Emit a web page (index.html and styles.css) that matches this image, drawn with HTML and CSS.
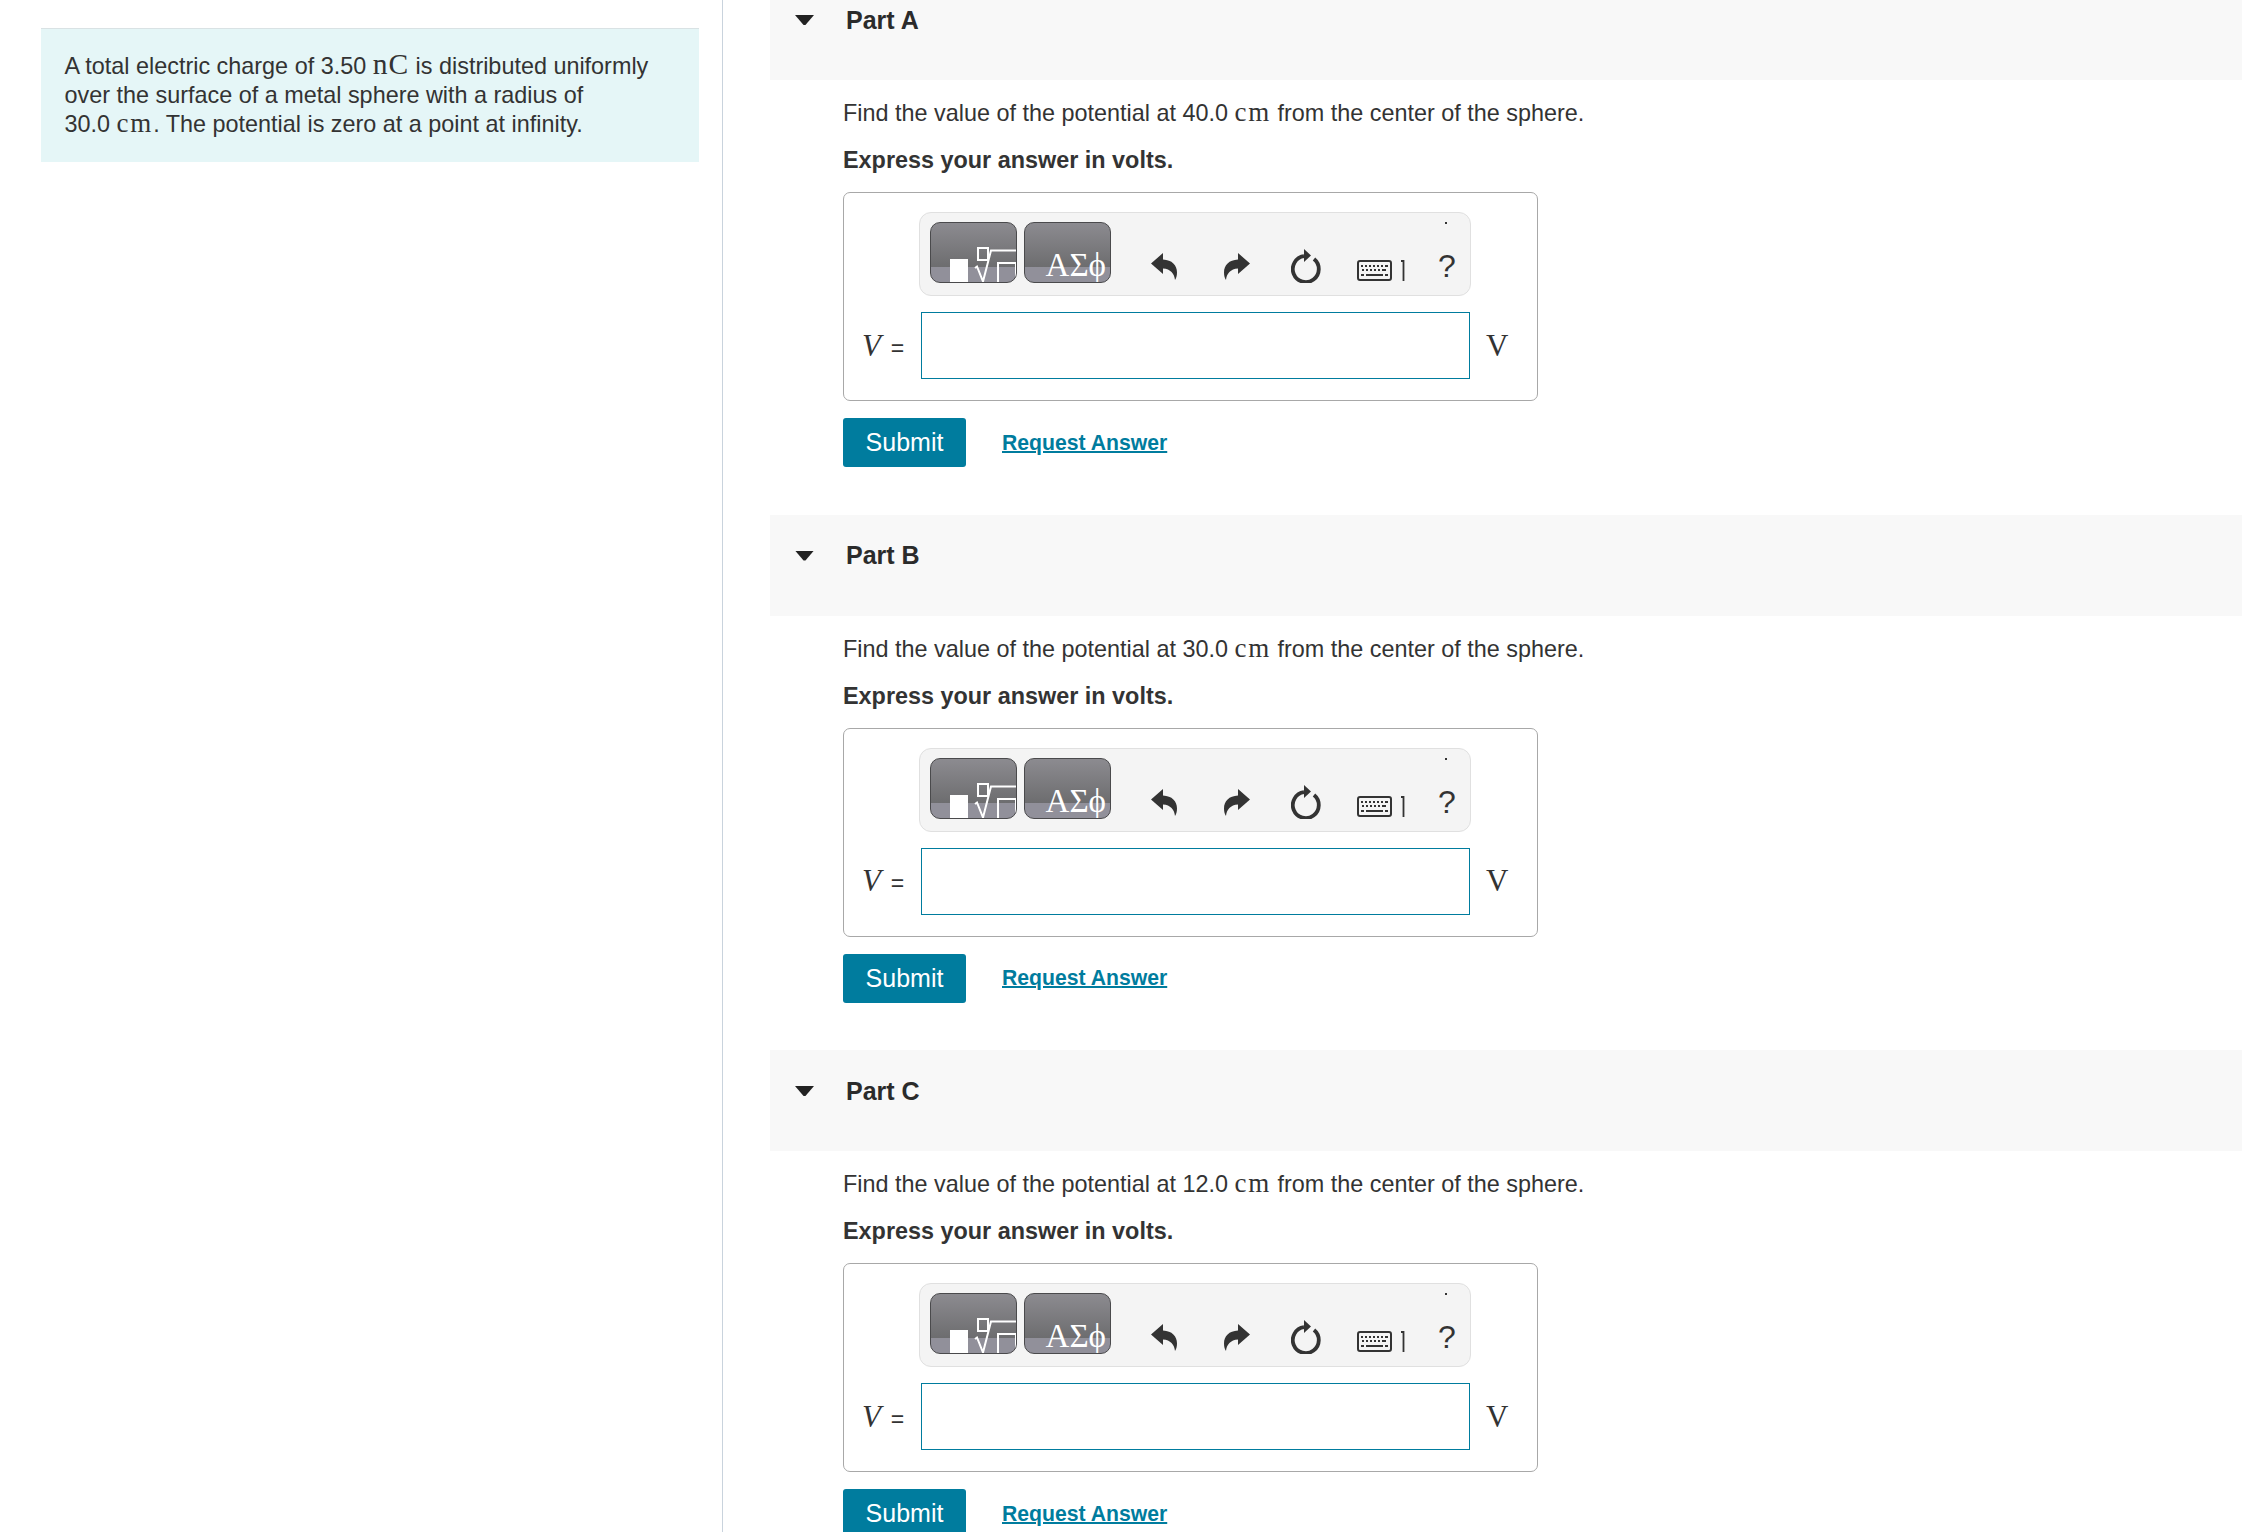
FILE: index.html
```html
<!DOCTYPE html>
<html lang="en">
<head>
<meta charset="utf-8">
<title>Electric potential of a charged sphere</title>
<link rel="stylesheet" href="styles.css">
</head>
<body>
<svg class="defs" width="0" height="0" aria-hidden="true">
  <symbol id="i-template" viewBox="0 0 87 61">
    <rect x="20" y="37" width="18" height="24" fill="#fff"/>
    <path d="M48 26h10v12h-10zM45 46l2-1.500 6 15 8-31h26M68 61v-20h18v20" fill="none" stroke="#fff" stroke-width="2"/>
  </symbol>
  <symbol id="i-undo" viewBox="0 0 26 28">
    <path d="M0 11.500 12 1v6.500c9 .5 14 5.500 14 13 0 3-.7 5.500-2 7.500-.6-6.500-4.500-11-12-11.500V22z" fill="#333"/>
  </symbol>
  <symbol id="i-redo" viewBox="0 0 26 28">
    <path d="M26 11.500 14 1v6.500C5 8 0 13 0 20.500c0 3 .7 5.500 2 7.500 .6-6.500 4.500-11 12-11.500V22z" fill="#333"/>
  </symbol>
  <symbol id="i-reset" viewBox="0 0 30 34">
    <path d="M23 10A13 13 0 1 1 13 7.200" fill="none" stroke="#333" stroke-width="3.800"/>
    <path d="M13 0l7 6.500-7 6.500z" fill="#333"/>
  </symbol>
  <symbol id="i-keys" viewBox="0 0 35 21">
    <rect x="1" y="1" width="33" height="19" rx="2" fill="none" stroke="#333" stroke-width="2"/>
    <path d="M4 5h2v2H4zM8 5h2v2H8zM12 5h2v2h-2zM16 5h2v2h-2zM20 5h2v2h-2zM24 5h2v2h-2zM28 5h3v2h-3zM5 9h2v2H5zM9 9h2v2H9zM13 9h2v2h-2zM17 9h2v2h-2zM21 9h2v2h-2zM25 9h4v2h-4zM4 14h3v2H4zM9 14h17v2H9zM28 14h3v2h-3z" fill="#333"/>
  </symbol>
  <symbol id="i-bracket" viewBox="0 0 4 21">
    <path d="M0 1h2.500v20" fill="none" stroke="#333" stroke-width="1.800"/>
  </symbol>
</svg>
<div class="page">
  <aside class="sidebar">
    <div class="intro">A total electric charge of 3.50 <span class="unit unit-lg">nC</span> is distributed uniformly<br>over the surface of a metal sphere with a radius of<br>30.0 <span class="unit">cm</span>. The potential is zero at a point at infinity.</div>
  </aside>
  <main class="parts">

    <section class="part">
      <header class="part-head"><span class="caret"></span><h2 class="part-title">Part A</h2></header>
      <p class="prompt">Find the value of the potential at 40.0 <span class="unit">cm</span> from the center of the sphere.</p>
      <p class="instruction">Express your answer in volts.</p>
      <div class="answer-box">
        <div class="toolbar">
          <span class="tool-btn"><svg class="btn-art"><use href="#i-template"/></svg></span>
          <span class="tool-btn tool-greek">ΑΣϕ</span>
          <svg class="ic ic-undo"><use href="#i-undo"/></svg>
          <svg class="ic ic-redo"><use href="#i-redo"/></svg>
          <svg class="ic ic-reset"><use href="#i-reset"/></svg>
          <svg class="ic ic-keys"><use href="#i-keys"/></svg>
          <svg class="ic ic-bracket"><use href="#i-bracket"/></svg>
          <span class="ic-help">?</span>
          <span class="tool-dot"></span>
        </div>
        <div class="answer-row">
          <span class="answer-label"><i class="var">V</i> <span class="eq">=</span></span>
          <span class="answer-input"></span>
          <span class="answer-unit">V</span>
        </div>
      </div>
      <div class="actions"><button class="submit">Submit</button><a class="request" href="#">Request Answer</a></div>
    </section>

    <section class="part">
      <header class="part-head"><span class="caret"></span><h2 class="part-title">Part B</h2></header>
      <p class="prompt">Find the value of the potential at 30.0 <span class="unit">cm</span> from the center of the sphere.</p>
      <p class="instruction">Express your answer in volts.</p>
      <div class="answer-box">
        <div class="toolbar">
          <span class="tool-btn"><svg class="btn-art"><use href="#i-template"/></svg></span>
          <span class="tool-btn tool-greek">ΑΣϕ</span>
          <svg class="ic ic-undo"><use href="#i-undo"/></svg>
          <svg class="ic ic-redo"><use href="#i-redo"/></svg>
          <svg class="ic ic-reset"><use href="#i-reset"/></svg>
          <svg class="ic ic-keys"><use href="#i-keys"/></svg>
          <svg class="ic ic-bracket"><use href="#i-bracket"/></svg>
          <span class="ic-help">?</span>
          <span class="tool-dot"></span>
        </div>
        <div class="answer-row">
          <span class="answer-label"><i class="var">V</i> <span class="eq">=</span></span>
          <span class="answer-input"></span>
          <span class="answer-unit">V</span>
        </div>
      </div>
      <div class="actions"><button class="submit">Submit</button><a class="request" href="#">Request Answer</a></div>
    </section>

    <section class="part">
      <header class="part-head"><span class="caret"></span><h2 class="part-title">Part C</h2></header>
      <p class="prompt">Find the value of the potential at 12.0 <span class="unit">cm</span> from the center of the sphere.</p>
      <p class="instruction">Express your answer in volts.</p>
      <div class="answer-box">
        <div class="toolbar">
          <span class="tool-btn"><svg class="btn-art"><use href="#i-template"/></svg></span>
          <span class="tool-btn tool-greek">ΑΣϕ</span>
          <svg class="ic ic-undo"><use href="#i-undo"/></svg>
          <svg class="ic ic-redo"><use href="#i-redo"/></svg>
          <svg class="ic ic-reset"><use href="#i-reset"/></svg>
          <svg class="ic ic-keys"><use href="#i-keys"/></svg>
          <svg class="ic ic-bracket"><use href="#i-bracket"/></svg>
          <span class="ic-help">?</span>
          <span class="tool-dot"></span>
        </div>
        <div class="answer-row">
          <span class="answer-label"><i class="var">V</i> <span class="eq">=</span></span>
          <span class="answer-input"></span>
          <span class="answer-unit">V</span>
        </div>
      </div>
      <div class="actions"><button class="submit">Submit</button><a class="request" href="#">Request Answer</a></div>
    </section>

  </main>
</div>
</body>
</html>
```
FILE: styles.css
```css
html, body {
  margin: 0;
  height: 100%;
  overflow: hidden;
  background: #fff;
}
body {
  font-family: "Liberation Sans", Arial, sans-serif;
  color: #333;
  font-size: 23.400px;
}
.defs { position: absolute; }
.page {
  display: flex;
  height: 1532px;
  overflow: hidden;
}
.sidebar {
  box-sizing: border-box;
  width: 723px;
  flex: none;
  padding: 28px 23px 0 41px;
  border-right: 1px solid #c9d3dd;
}
.intro {
  box-sizing: border-box;
  height: 134px;
  padding: 21px 23px 0 23.500px;
  background: #e5f6f7;
  border-top: 1px solid #d9e2e4;
  line-height: 29px;
}
.unit {
  font-family: "Liberation Serif", serif;
  font-size: 27px;
  line-height: 1;
  letter-spacing: 1.800px;
}
.unit-lg { font-size: 29.500px; letter-spacing: 1px; }
.parts {
  flex: 1;
  min-width: 0;
  padding-left: 47px;
  margin-top: -21px;
}
.part { height: 535.500px; }
.part-head {
  box-sizing: border-box;
  display: flex;
  align-items: center;
  height: 101px;
  padding: 0 0 19px 25px;
  background: #f8f8f8;
}
.caret {
  width: 19px;
  height: 10px;
  background: #222;
  clip-path: polygon(0 0, 100% 0, 55% 100%, 45% 100%);
}
.part-title {
  margin: 0 0 0 32px;
  font-size: 25px;
  font-weight: bold;
  color: #2b2b2b;
}
.prompt, .instruction {
  margin: 0 0 0 73px;
  line-height: 29px;
}
.prompt { padding-top: 19px; }
.instruction {
  padding-top: 18px;
  font-weight: bold;
}
.answer-box {
  box-sizing: border-box;
  width: 695px;
  height: 209px;
  margin: 17px 0 0 73px;
  padding: 19px 0 0 75px;
  border: 1px solid #a8a8a8;
  border-radius: 7px;
}
.toolbar {
  box-sizing: border-box;
  position: relative;
  display: flex;
  align-items: flex-end;
  width: 552px;
  height: 84px;
  padding: 0 0 12px 10px;
  background: #f4f4f4;
  border: 1px solid #e0e0e0;
  border-radius: 12px;
}
.tool-btn {
  box-sizing: border-box;
  position: relative;
  display: block;
  width: 87px;
  height: 61px;
  overflow: hidden;
  border: 1px solid #4a4a4c;
  border-radius: 10px;
  background: linear-gradient(#8c8b90 0, #6d6d6f 74%, #91909a 74%, #91909a 100%);
}
.tool-btn + .tool-btn { margin-left: 7px; }
.btn-art {
  position: absolute;
  left: -1px;
  top: -1px;
  width: 87px;
  height: 61px;
}
.tool-greek {
  color: #fff;
  font-family: "Liberation Serif", serif;
  font-size: 33px;
  line-height: 61px;
  text-align: right;
  padding: 12px 4px 0 0;
}
.ic { display: block; flex: none; }
.ic-undo { width: 26px; height: 28px; margin: 0 0 3px 40px; }
.ic-redo { width: 26px; height: 28px; margin: 0 0 3px 47px; }
.ic-reset { width: 30px; height: 34px; margin: 0 0 0 41px; }
.ic-keys { width: 35px; height: 21px; margin: 0 0 2px 36px; }
.ic-bracket { width: 4px; height: 21px; margin: 0 0 2px 9px; }
.ic-help {
  margin: 0 0 0 33px;
  font-size: 32px;
  line-height: 34px;
  color: #333;
}
.tool-dot {
  position: absolute;
  left: 525px;
  top: 9px;
  width: 2px;
  height: 2px;
  background: #333;
}
.answer-row {
  display: flex;
  align-items: center;
  margin: 16px 0 0 -75px;
}
.answer-label {
  box-sizing: border-box;
  width: 77px;
  padding-left: 18px;
  white-space: nowrap;
  font-family: "Liberation Serif", serif;
  font-size: 31px;
}
.var { font-style: italic; }
.eq {
  font-family: "Liberation Sans", sans-serif;
  font-size: 23px;
  margin-left: 2px;
}
.answer-input {
  box-sizing: border-box;
  width: 549px;
  height: 67px;
  border: 1px solid #007c9e;
  background: #fff;
}
.answer-unit {
  margin-left: 16px;
  font-family: "Liberation Serif", serif;
  font-size: 31px;
}
.actions {
  display: flex;
  align-items: center;
  margin: 17px 0 0 73px;
}
.submit {
  width: 123px;
  height: 49px;
  padding: 0;
  border: 0;
  border-radius: 3px;
  background: #007c9e;
  color: #fff;
  font-family: "Liberation Sans", sans-serif;
  font-size: 25px;
}
.request {
  margin-left: 36px;
  color: #007c9e;
  font-weight: bold;
  font-size: 21.200px;
  text-decoration: underline;
  text-decoration-thickness: 2px;
}
```
